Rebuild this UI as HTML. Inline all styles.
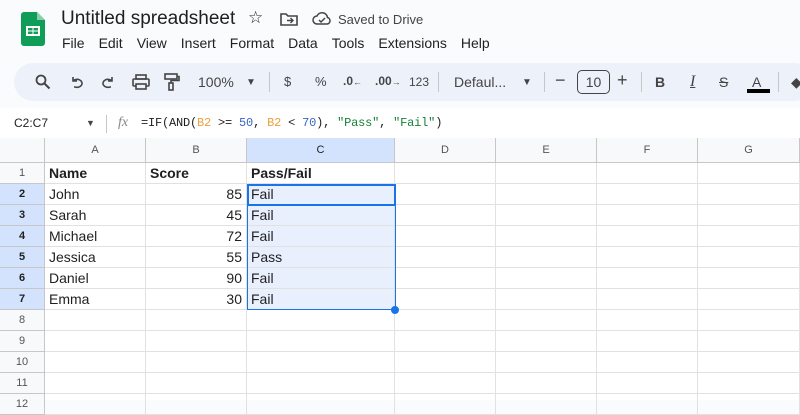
<!DOCTYPE html>
<html><head><style>
*{margin:0;padding:0;box-sizing:border-box}
body{width:800px;height:400px;overflow:hidden;background:#f9fbfd;font-family:"Liberation Sans",Arial,sans-serif;position:relative;color:#1f1f1f}
.a{position:absolute}
.menu span{margin-right:14px}
.tb{position:absolute;top:63px;left:14px;width:800px;height:38px;background:#edf2fa;border-radius:20px}
.ti{position:absolute;top:74px;font-size:14px;color:#444}
.grid{position:absolute;top:138px;left:0;width:800px;height:262px;background:#fff}
.cell{position:absolute;border-right:1px solid #e1e1e1;border-bottom:1px solid #e1e1e1;font-size:14px;line-height:20px;padding:0 4px;white-space:nowrap}
.hd{background:#f8f9fa;color:#555;font-size:11px;text-align:center;border-color:#c7c7c7}
</style></head><body>
<div class="a" style="left:0;top:0;width:800px;height:62px;background:#f9fbfd"></div>
<svg class="a" style="left:21px;top:12px" width="24" height="34" viewBox="0 0 24 34"><path d="M2 0h14l8 8v23a3 3 0 0 1-3 3H3a3 3 0 0 1-3-3V3a3 3 0 0 1 3-3z" fill="#0f9d58"/><path d="M16 0v8h8z" fill="#87ceac"/><rect x="5" y="14" width="14" height="10" fill="#fff"/><rect x="7" y="16" width="4.5" height="2.5" fill="#0f9d58"/><rect x="12.5" y="16" width="4.5" height="2.5" fill="#0f9d58"/><rect x="7" y="19.5" width="4.5" height="2.5" fill="#0f9d58"/><rect x="12.5" y="19.5" width="4.5" height="2.5" fill="#0f9d58"/></svg>
<div class="a" style="left:61px;top:8px;font-size:19px;color:#1f1f1f">Untitled spreadsheet</div>
<div class="a" style="left:248px;top:8px;font-size:17px">☆</div>
<svg class="a" style="left:280px;top:12px" width="18" height="14"><path d="M1 2h5l2 2h9v9H1z" fill="none" stroke="#444" stroke-width="1.6"/><path d="M7 8.5h6M10.5 6l2.5 2.5-2.5 2.5" fill="none" stroke="#444" stroke-width="1.4"/></svg>
<svg class="a" style="left:312px;top:11px" width="20" height="15"><path d="M5 13a4 4 0 0 1 0-8 5.5 5.5 0 0 1 10.5 1.5A3.3 3.3 0 0 1 15 13z" fill="none" stroke="#444" stroke-width="1.5"/><path d="M7 9l2 2 4-4" fill="none" stroke="#444" stroke-width="1.5"/></svg>
<div class="a" style="left:338px;top:12px;font-size:13px;color:#444">Saved to Drive</div>
<div class="a menu" style="left:62px;top:35px;font-size:14px;color:#1f1f1f"><span>File</span><span>Edit</span><span>View</span><span>Insert</span><span>Format</span><span>Data</span><span>Tools</span><span>Extensions</span><span>Help</span></div>
<div class="tb"></div>
<svg class="a" style="left:35px;top:74px" width="16" height="16"><circle cx="6" cy="6" r="4.5" fill="none" stroke="#444" stroke-width="1.8"/><path d="M9.5 9.5l5 5" stroke="#444" stroke-width="2"/></svg>
<svg class="a" style="left:70px;top:75px" width="14" height="14"><path d="M3 2v4h4M3 6a5 4 0 1 1 2 6h-1" fill="none" stroke="#444" stroke-width="1.6"/></svg>
<svg class="a" style="left:101px;top:75px" width="14" height="14"><path d="M11 2v4H7M11 6a5 4 0 1 0-2 6h1" fill="none" stroke="#444" stroke-width="1.6"/></svg>
<svg class="a" style="left:132px;top:74px" width="18" height="16"><rect x="4" y="1" width="10" height="4" fill="none" stroke="#444" stroke-width="1.6"/><rect x="1" y="5" width="16" height="7" rx="1" fill="none" stroke="#444" stroke-width="1.6"/><rect x="4" y="10" width="10" height="5" fill="#edf2fa" stroke="#444" stroke-width="1.6"/></svg>
<svg class="a" style="left:164px;top:73px" width="16" height="18"><rect x="1" y="1" width="12" height="5" fill="none" stroke="#444" stroke-width="1.6"/><path d="M13 3.5h2v4H7v3" fill="none" stroke="#444" stroke-width="1.6"/><rect x="5" y="10" width="4" height="7" fill="none" stroke="#444" stroke-width="1.6"/></svg>
<div class="ti" style="left:198px">100%</div>
<div class="ti" style="left:246px;font-size:10px;top:77px">▼</div>
<div class="a" style="left:269px;top:72px;width:1px;height:20px;background:#c7c7c7"></div>
<div class="ti" style="left:284px;font-size:13px">$</div>
<div class="ti" style="left:315px;font-size:13px">%</div>
<div class="ti" style="left:343px;font-size:12px;font-weight:bold">.0<span style="font-size:9px">←</span></div>
<div class="ti" style="left:375px;font-size:12px;font-weight:bold">.00<span style="font-size:9px">→</span></div>
<div class="ti" style="left:409px;font-size:12px;top:75px">123</div>
<div class="a" style="left:438px;top:72px;width:1px;height:20px;background:#c7c7c7"></div>
<div class="ti" style="left:454px">Defaul...</div>
<div class="ti" style="left:522px;font-size:10px;top:77px">▼</div>
<div class="a" style="left:544px;top:72px;width:1px;height:20px;background:#c7c7c7"></div>
<div class="ti" style="left:555px;font-size:18px;top:70px">−</div>
<div class="a" style="left:577px;top:70px;width:33px;height:24px;border:1px solid #444;border-radius:5px;font-size:14px;text-align:center;line-height:22px;color:#444">10</div>
<div class="ti" style="left:617px;font-size:18px;top:70px">+</div>
<div class="a" style="left:641px;top:72px;width:1px;height:20px;background:#c7c7c7"></div>
<div class="ti" style="left:655px;font-weight:bold">B</div>
<div class="ti" style="left:690px;font-style:italic;font-family:'Liberation Serif',serif;font-size:16px;top:73px;text-decoration:underline">I</div>
<div class="ti" style="left:719px;text-decoration:line-through">S</div>
<div class="ti" style="left:752px">A</div>
<div class="a" style="left:747px;top:89px;width:23px;height:4px;background:#000"></div>
<div class="a" style="left:778px;top:72px;width:1px;height:20px;background:#c7c7c7"></div>
<div class="ti" style="left:791px">◆</div>
<div class="a" style="left:0;top:108px;width:800px;height:30px;background:#fff"></div>
<div class="a" style="left:14px;top:116px;font-size:12px">C2:C7</div>
<div class="a" style="left:86px;top:118px;font-size:9px;color:#444">▼</div>
<div class="a" style="left:106px;top:115px;width:1px;height:18px;background:#c7c7c7"></div>
<div class="a" style="left:118px;top:115px;font-size:14px;font-style:italic;font-family:'Liberation Serif',serif;color:#888">fx</div>
<div class="a" style="left:141px;top:116px;font-size:12px;font-family:'Liberation Mono',monospace;color:#1f1f1f;letter-spacing:-0.2px">=IF(AND(<span style="color:#e8a13d">B2</span> &gt;= <span style="color:#3a67c4">50</span>, <span style="color:#e8a13d">B2</span> &lt; <span style="color:#3a67c4">70</span>), <span style="color:#188038">"Pass"</span>, <span style="color:#188038">"Fail"</span>)</div>
<div class="grid" id="g"></div>
<script>
var g=document.getElementById('g');
var xs=[0,45,146,247,395,496,597,698,800];
var cols=['','A','B','C','D','E','F','G'];
var data=[['Name','Score','Pass/Fail'],['John','85','Fail'],['Sarah','45','Fail'],['Michael','72','Fail'],['Jessica','55','Pass'],['Daniel','90','Fail'],['Emma','30','Fail']];
var h='';
function c(x,y,w,hh,cls,st,t){h+='<div class="cell '+cls+'" style="left:'+x+'px;top:'+y+'px;width:'+w+'px;height:'+hh+'px;'+st+'">'+t+'</div>';}
for(var i=0;i<8;i++){var sel=i==3;c(xs[i],0,xs[i+1]-xs[i],25,'hd','line-height:24px;'+(sel?'background:#d3e3fd;color:#1f1f1f;':''),cols[i]);}
for(var r=1;r<=12;r++){var y=25+(r-1)*21;var s=r>=2&&r<=7;
c(0,y,45,21,'hd','line-height:20px;'+(s?'background:#d3e3fd;color:#1f1f1f;font-weight:bold;':''),r);
for(var i=1;i<8;i++){var t='',st='';var d=data[r-1];
if(d&&i<=3){t=d[i-1];if(r==1)st+='font-weight:bold;';if(i==2&&r>1)st+='text-align:right;';}
if(i==3&&s)st+='background:#e8f0fe;';
c(xs[i],y,xs[i+1]-xs[i],21,'',st,t);}}
h+='<div class="a" style="left:247px;top:46px;width:149px;height:126px;border:1px solid #1a73e8;"></div>';
h+='<div class="a" style="left:247px;top:46px;width:149px;height:22px;border:2px solid #1a73e8;"></div>';
h+='<div class="a" style="left:391px;top:168px;width:8px;height:8px;border-radius:50%;background:#1a73e8"></div>';
g.innerHTML=h;
</script>
</body></html>
